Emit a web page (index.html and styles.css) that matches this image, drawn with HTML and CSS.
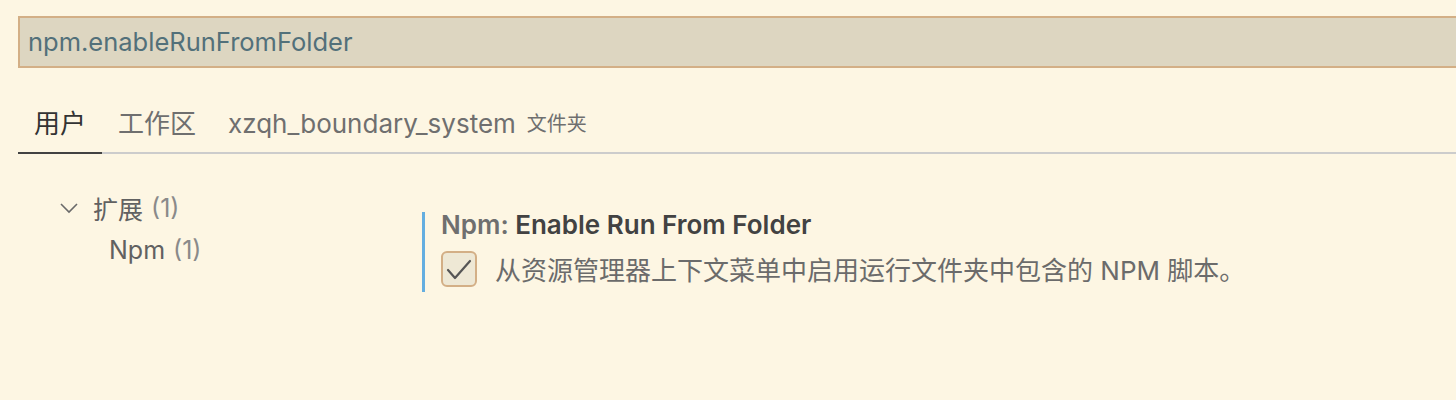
FILE: index.html
```html
<!DOCTYPE html>
<html lang="zh-CN">
<head>
<meta charset="utf-8">
<title>Settings</title>
<link rel="stylesheet" href="styles.css">
</head>
<body>
<div class="page">
  <div class="search">npm.enableRunFromFolder</div>
  <div class="tabs">
    <div class="tab active">用户</div>
    <div class="tab">工作区</div>
    <div class="tab">xzqh_boundary_system<span class="tab-sub">文件夹</span></div>
  </div>
  <div class="main">
    <div class="tree">
      <div class="row row-top">
        <svg class="chev" width="20" height="12" viewBox="0 0 20 12"><polyline points="2,2 10,10 18,2" fill="none" stroke="#6a6a6a" stroke-width="1.6"/></svg>
        <span class="label">扩展</span><span class="count">(1)</span>
      </div>
      <div class="row row-sub">
        <span class="label">Npm</span><span class="count">(1)</span>
      </div>
    </div>
    <div class="setting">
      <div class="title"><span class="cat">Npm: </span><span class="name">Enable Run From Folder</span></div>
      <div class="value">
        <span class="checkbox">
          <svg width="32" height="32" viewBox="0 0 32 32"><polyline points="5,17 12,25 27,8" fill="none" stroke="#555555" stroke-width="2.2" stroke-linecap="round" stroke-linejoin="round"/></svg>
        </span>
        <span class="desc">从资源管理器上下文菜单中启用运行文件夹中包含的 NPM 脚本。</span>
      </div>
    </div>
  </div>
</div>
</body>
</html>
```
FILE: styles.css
```css
html, body {
  margin: 0;
  padding: 0;
  background: #fdf6e3;
  overflow: hidden;
}
.page {
  width: 1456px;
  height: 400px;
  font-family: Inter, "Noto Sans CJK SC", sans-serif;
  overflow: hidden;
}
.search {
  margin: 16px 0 0 18px;
  height: 48px;
  line-height: 48px;
  border: 2px solid #d3af86;
  border-right: none;
  background: #ddd6c1;
  padding-left: 8px;
  font-size: 25.5px;
  color: #52707a;
}
.tabs {
  margin: 28px 0 0 18px;
  display: flex;
  border-bottom: 2px solid #cccccc;
  height: 56px;
}
.tab {
  padding: 0 16px;
  line-height: 56px;
  height: 56px;
  font-size: 26px;
  color: #6f6f6f;
  box-sizing: border-box;
  display: flex;
  align-items: center;
}
.tab.active {
  color: #333333;
  border-bottom: 2px solid #424242;
  height: 58px;
}
.tab-sub {
  font-size: 20px;
  margin-left: 11px;
  color: #6f6f6f;
}
.main {
  display: flex;
}
.tree {
  width: 422px;
  margin-top: 33px;
}
.row {
  height: 42px;
  display: flex;
  align-items: center;
  font-size: 25px;
  color: #616161;
}
.row-top {
  padding-left: 59px;
}
.chev {
  margin-right: 14px;
}
.row-sub {
  padding-left: 109px;
}
.count {
  margin-left: 8px;
  color: #8a8a8a;
}
.setting {
  margin-top: 58px;
  border-left: 3px solid #64aee0;
  padding-left: 16px;
  padding-bottom: 5px;
}
.title {
  font-size: 26px;
  font-weight: 600;
  line-height: 26px;
  height: 26px;
}
.cat {
  color: #6f6f6f;
}
.name {
  color: #424242;
}
.value {
  margin-top: 12px;
  display: flex;
  align-items: center;
}
.checkbox {
  width: 32px;
  height: 32px;
  border: 2px solid #d3af86;
  border-radius: 6px;
  background: #eee8d5;
  display: flex;
}
.desc {
  margin-left: 18px;
  font-size: 26px;
  color: #6b6b6b;
}
```
